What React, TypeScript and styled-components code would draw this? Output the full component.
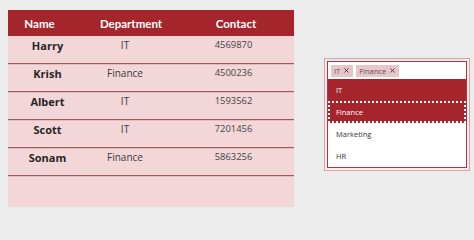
import styled, { createGlobalStyle } from 'styled-components';
import { X } from 'lucide-react';

const GlobalStyle = createGlobalStyle`
  html, body {
    margin: 0;
    padding: 0;
    height: 207px;
    overflow: hidden;
    background: #ececec;
    font-family: 'Open Sans', 'Liberation Sans', sans-serif;
  }
`;

const Page = styled.div`
  display: flex;
  align-items: flex-start;
  height: 207px;
  box-sizing: border-box;
  overflow: hidden;
  padding: 10px 0 0 8px;
`;

const Table = styled.div`
  width: 287px;
  height: 197px;
  overflow: hidden;
  background: #f2d6d8;
  border-right: 1px solid #f8e6e7;
  box-sizing: border-box;
`;

const HeaderRow = styled.div`
  display: grid;
  grid-template-columns: 63px 120px 1fr;
  height: 26px;
  align-items: center;
  background: #a4262c;
  color: #fff;
  font-family: Lato, 'Open Sans', sans-serif;
  font-weight: 700;
  font-size: 11.5px;
`;

const HeaderCell = styled.div<{ $shift?: number }>`
  text-align: center;
  padding-right: ${({ $shift }) => $shift ?? 0}px;
`;

const Row = styled.div`
  display: grid;
  grid-template-columns: 79px 76px 1fr;
  height: 28px;
  box-sizing: border-box;
  border-bottom: 1px solid #9c5a5f;
  box-shadow: 0 1px 0 #e0bcbf;
  align-items: start;
`;

const NameCell = styled.div`
  text-align: center;
  font-weight: 700;
  font-size: 11px;
  line-height: 19px;
  color: #262626;
`;

const DeptCell = styled.div`
  text-align: center;
  font-size: 10px;
  line-height: 19px;
  color: #3a3a3a;
`;

const ContactCell = styled.div`
  text-align: center;
  padding-left: 10px;
  font-size: 9.4px;
  line-height: 18px;
  color: #444;
`;

const Frame = styled.div`
  margin: 48px 0 0 29px;
  width: 146px;
  box-sizing: border-box;
  padding: 2px;
  border: 1px solid #e79da3;
  background: #f7eeef;
`;

const Combo = styled.div`
  border: 1px solid #b8333b;
  background: #fff;
`;

const InputBar = styled.div`
  display: flex;
  align-items: center;
  gap: 3px;
  height: 17px;
  padding-left: 3px;
  background: #fff;
`;

const Chip = styled.span`
  display: inline-flex;
  align-items: center;
  gap: 3px;
  height: 12px;
  padding: 0 3px;
  background: #e8c5c8;
  color: #555;
  font-size: 7.5px;
  svg {
    color: #333;
  }
`;

const Item = styled.div<{ $selected?: boolean; $focused?: boolean }>`
  display: flex;
  align-items: center;
  height: 22px;
  box-sizing: border-box;
  padding-left: ${({ $focused }) => ($focused ? 6 : 8)}px;
  font-size: 7.5px;
  background: ${({ $selected }) => ($selected ? '#a4262c' : '#fff')};
  color: ${({ $selected }) => ($selected ? '#fff' : '#333')};
  border: ${({ $focused }) => ($focused ? '2px dotted #fff' : 'none')};
`;

const people = [
  { name: 'Harry', dept: 'IT', contact: '4569870' },
  { name: 'Krish', dept: 'Finance', contact: '4500236' },
  { name: 'Albert', dept: 'IT', contact: '1593562' },
  { name: 'Scott', dept: 'IT', contact: '7201456' },
  { name: 'Sonam', dept: 'Finance', contact: '5863256' },
];

const options = [
  { label: 'IT', selected: true },
  { label: 'Finance', selected: true, focused: true },
  { label: 'Marketing' },
  { label: 'HR' },
];

export default function App() {
  return (
    <>
      <GlobalStyle />
      <Page>
        <Table>
          <HeaderRow>
            <HeaderCell>Name</HeaderCell>
            <HeaderCell>Department</HeaderCell>
            <HeaderCell $shift={13}>Contact</HeaderCell>
          </HeaderRow>
          {people.map((p) => (
            <Row key={p.name}>
              <NameCell>{p.name}</NameCell>
              <DeptCell>{p.dept}</DeptCell>
              <ContactCell>{p.contact}</ContactCell>
            </Row>
          ))}
        </Table>
        <Frame>
          <Combo>
            <InputBar>
              <Chip>
                IT <X size={7} strokeWidth={3} />
              </Chip>
              <Chip>
                Finance <X size={7} strokeWidth={3} />
              </Chip>
            </InputBar>
            {options.map((o) => (
              <Item key={o.label} $selected={o.selected} $focused={o.focused}>
                {o.label}
              </Item>
            ))}
          </Combo>
        </Frame>
      </Page>
    </>
  );
}
